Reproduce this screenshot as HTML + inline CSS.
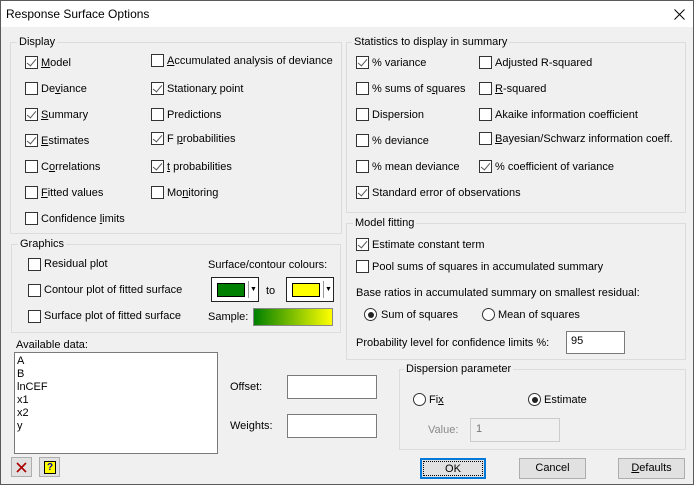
<!DOCTYPE html>
<html><head><meta charset="utf-8"><style>
*{box-sizing:border-box}
body{margin:0;width:694px;height:485px;overflow:hidden;font-family:"Liberation Sans",sans-serif;font-size:11px;color:#000;background:#f0f0f0}
.win{position:absolute;left:0;top:0;width:694px;height:485px;border:1px solid #5a5a5a;background:#f0f0f0}
.title{position:absolute;left:0;top:0;width:692px;height:26px;background:#fff}
.a{position:absolute;white-space:nowrap;line-height:14px}
.g{position:absolute;border:1px solid #dcdcdc}
.gl{position:absolute;background:#f0f0f0;padding:0 2px;line-height:14px}
.cb{position:absolute;width:13px;height:13px;border:1px solid #333;background:#fff}
.cb.c::after{content:"";position:absolute;left:3px;top:0px;width:4px;height:8px;border:solid #555;border-width:0 1.3px 1.3px 0;transform:rotate(40deg)}
.rb{position:absolute;width:13px;height:13px;border:1px solid #333;border-radius:50%;background:#fff}
.rb.c::after{content:"";position:absolute;left:2.5px;top:2.5px;width:6px;height:6px;border-radius:50%;background:#222}
.box{position:absolute;background:#fff;border:1px solid #7a7a7a}
.btn{position:absolute;background:#e1e1e1;border:1px solid #adadad;text-align:center;line-height:18px}
u{text-decoration:underline}
</style></head><body><div class="win">
<div class="title"></div>
<div class="a" style="left:5px;top:6px;font-size:12px">Response Surface Options</div>
<svg style="position:absolute;left:328px;top:0" width="0" height="0"></svg>
<svg style="position:absolute;left:673px;top:8px" width="11" height="11"><path d="M0.5 0.5L10.5 10.5M10.5 0.5L0.5 10.5" stroke="#000" stroke-width="1"/></svg>

<!-- Display -->
<div class="g" style="left:9px;top:41px;width:332px;height:192px"></div>
<div class="gl" style="left:16px;top:34px">Display</div>
<div class="cb c" style="left:24px;top:55px"></div><div class="a" style="left:40px;top:55px"><u>M</u>odel</div>
<div class="cb" style="left:24px;top:81px"></div><div class="a" style="left:40px;top:81px">De<u>v</u>iance</div>
<div class="cb c" style="left:24px;top:107px"></div><div class="a" style="left:40px;top:107px"><u>S</u>ummary</div>
<div class="cb c" style="left:24px;top:133px"></div><div class="a" style="left:40px;top:133px"><u>E</u>stimates</div>
<div class="cb" style="left:24px;top:159px"></div><div class="a" style="left:40px;top:159px">C<u>o</u>rrelations</div>
<div class="cb" style="left:24px;top:185px"></div><div class="a" style="left:40px;top:185px"><u>F</u>itted values</div>
<div class="cb" style="left:24px;top:211px"></div><div class="a" style="left:40px;top:211px">Confidence <u>l</u>imits</div>
<div class="cb" style="left:150px;top:53px"></div><div class="a" style="left:166px;top:53px"><u>A</u>ccumulated analysis of deviance</div>
<div class="cb c" style="left:150px;top:81px"></div><div class="a" style="left:166px;top:81px">Stationar<u>y</u> point</div>
<div class="cb" style="left:150px;top:107px"></div><div class="a" style="left:166px;top:107px">Predictions</div>
<div class="cb c" style="left:150px;top:131px"></div><div class="a" style="left:166px;top:131px">F <u>p</u>robabilities</div>
<div class="cb c" style="left:150px;top:159px"></div><div class="a" style="left:166px;top:159px"><u>t</u> probabilities</div>
<div class="cb" style="left:150px;top:185px"></div><div class="a" style="left:166px;top:185px">Mo<u>n</u>itoring</div>

<!-- Graphics -->
<div class="g" style="left:10px;top:243px;width:330px;height:89px"></div>
<div class="gl" style="left:17px;top:236px">Graphics</div>
<div class="cb" style="left:27px;top:257px"></div><div class="a" style="left:43px;top:256px">Residual plot</div>
<div class="cb" style="left:27px;top:283px"></div><div class="a" style="left:43px;top:282px">Contour plot of fitted surface</div>
<div class="cb" style="left:27px;top:309px"></div><div class="a" style="left:43px;top:308px">Surface plot of fitted surface</div>
<div class="a" style="left:207px;top:257px">Surface/contour colours:</div>
<div style="position:absolute;left:210px;top:276px;width:48px;height:25px;border:1px solid #222;background:#fff"><div style="position:absolute;left:5px;top:5px;width:28px;height:14px;background:#008000;border:1px solid #000"></div><div style="position:absolute;left:36px;top:3px;width:1px;height:17px;background:#999"></div><div class="a" style="left:38px;top:5px;font-size:7px">▼</div></div>
<div class="a" style="left:265px;top:283px">to</div>
<div style="position:absolute;left:285px;top:276px;width:48px;height:25px;border:1px solid #222;background:#fff"><div style="position:absolute;left:5px;top:5px;width:28px;height:14px;background:#ffff00;border:1px solid #000"></div><div style="position:absolute;left:36px;top:3px;width:1px;height:17px;background:#999"></div><div class="a" style="left:38px;top:5px;font-size:7px">▼</div></div>
<div class="a" style="left:207px;top:309px">Sample:</div>
<div style="position:absolute;left:252px;top:307px;width:80px;height:18px;border:1px solid #888;background:linear-gradient(to right,#008000,#ffff00)"></div>

<div class="a" style="left:15px;top:337px">Available data:</div>
<div class="box" style="left:13px;top:351px;width:204px;height:102px"></div>
<div class="a" style="left:16px;top:354px;line-height:13px">A<br>B<br>lnCEF<br>x1<br>x2<br>y</div>
<div class="a" style="left:229px;top:379px">Offset:</div>
<div class="box" style="left:286px;top:374px;width:90px;height:24px"></div>
<div class="a" style="left:229px;top:418px">Weights:</div>
<div class="box" style="left:286px;top:413px;width:90px;height:24px"></div>
<div class="btn" style="left:10px;top:456px;width:21px;height:20px"><svg style="position:absolute;left:4px;top:4px" width="11" height="11"><path d="M1 1L10 10M10 1L1 10" stroke="#a00" stroke-width="1.6"/></svg></div>
<div class="btn" style="left:38px;top:456px;width:21px;height:20px"><div style="position:absolute;left:4px;top:3px;width:12px;height:13px;background:#ff0;border:1px solid #000;color:#00a;font-size:10px;line-height:11px;font-weight:bold">?</div></div>

<!-- Stats -->
<div class="g" style="left:345px;top:41px;width:340px;height:171px"></div>
<div class="gl" style="left:351px;top:34px">Statistics to display in summary</div>
<div class="cb c" style="left:355px;top:55px"></div><div class="a" style="left:371px;top:55px">% variance</div>
<div class="cb" style="left:355px;top:81px"></div><div class="a" style="left:371px;top:81px">% sums of s<u>q</u>uares</div>
<div class="cb" style="left:355px;top:107px"></div><div class="a" style="left:371px;top:107px">Dispersion</div>
<div class="cb" style="left:355px;top:133px"></div><div class="a" style="left:371px;top:133px">% deviance</div>
<div class="cb" style="left:355px;top:159px"></div><div class="a" style="left:371px;top:159px">% mean deviance</div>
<div class="cb c" style="left:355px;top:185px"></div><div class="a" style="left:371px;top:185px">Standard error of observations</div>
<div class="cb" style="left:478px;top:55px"></div><div class="a" style="left:494px;top:55px">Ad<u>j</u>usted R-squared</div>
<div class="cb" style="left:478px;top:81px"></div><div class="a" style="left:494px;top:81px"><u>R</u>-squared</div>
<div class="cb" style="left:478px;top:107px"></div><div class="a" style="left:494px;top:107px">Akaike information coefficient</div>
<div class="cb" style="left:478px;top:131px"></div><div class="a" style="left:494px;top:131px"><u>B</u>ayesian/Schwarz information coeff.</div>
<div class="cb c" style="left:478px;top:159px"></div><div class="a" style="left:494px;top:159px">% coefficient of variance</div>

<!-- Model fitting -->
<div class="g" style="left:345px;top:222px;width:340px;height:137px"></div>
<div class="gl" style="left:352px;top:215px">Model fitting</div>
<div class="cb c" style="left:355px;top:237px"></div><div class="a" style="left:371px;top:237px">Estimate constant term</div>
<div class="cb" style="left:355px;top:259px"></div><div class="a" style="left:371px;top:259px">Pool sums of squares in accumulated summary</div>
<div class="a" style="left:355px;top:285px">Base ratios in accumulated summary on smallest residual:</div>
<div class="rb c" style="left:363px;top:307px"></div><div class="a" style="left:380px;top:307px">Sum of squares</div>
<div class="rb" style="left:481px;top:307px"></div><div class="a" style="left:497px;top:307px">Mean of squares</div>
<div class="a" style="left:355px;top:335px">Probability level for confidence limits %:</div>
<div class="box" style="left:565px;top:330px;width:59px;height:23px"></div>
<div class="a" style="left:570px;top:333px">95</div>

<!-- Dispersion -->
<div class="g" style="left:398px;top:368px;width:287px;height:81px"></div>
<div class="gl" style="left:403px;top:361px">Dispersion parameter</div>
<div class="rb" style="left:412px;top:392px"></div><div class="a" style="left:428px;top:392px">Fi<u>x</u></div>
<div class="rb c" style="left:527px;top:392px"></div><div class="a" style="left:543px;top:392px">Estimate</div>
<div class="a" style="left:427px;top:422px;color:#8a8a8a">Value:</div>
<div style="position:absolute;left:469px;top:417px;width:90px;height:24px;border:1px solid #ccc;background:#f0f0f0"></div>
<div class="a" style="left:475px;top:421px;color:#777">1</div>

<div class="btn" style="left:419px;top:457px;width:66px;height:21px;border:2px solid #0078d7"><div style="position:absolute;left:1px;top:1px;right:1px;bottom:1px;border:1px dotted #000;line-height:15px">OK</div></div>
<div class="btn" style="left:518px;top:457px;width:67px;height:21px">Cancel</div>
<div class="btn" style="left:617px;top:457px;width:67px;height:21px"><u>D</u>efaults</div>
</div></body></html>
